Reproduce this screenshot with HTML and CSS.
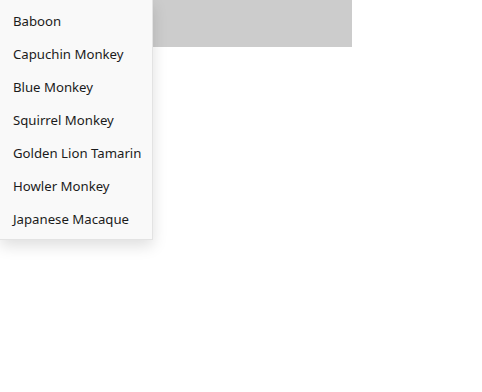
FILE: index.html
```html
<!doctype html>
<html lang="en">
    <head>
        <meta charset="utf-8">
        <title>Monkeys</title>
        <link rel="stylesheet" href="styles.css">
    </head>
    <body>
        <div class="page">
            <div class="combo"></div>
            <ul class="menu">
                <li class="menu__item">Baboon</li>
                <li class="menu__item">Capuchin Monkey</li>
                <li class="menu__item">Blue Monkey</li>
                <li class="menu__item">Squirrel Monkey</li>
                <li class="menu__item">Golden Lion Tamarin</li>
                <li class="menu__item">Howler Monkey</li>
                <li class="menu__item">Japanese Macaque</li>
            </ul>
        </div>
    </body>
</html>
```

FILE: styles.css
```css
body {
    background: #fff;
    margin: 0;
}

.page {
    position: relative;
    height: 392px;
}

.combo {
    background: #cccccc;
    height: 47px;
    width: 352px;
}

.menu {
    background: #f9f9f9;
    border: 1px solid #e3e3e3;
    border-left: 0;
    border-top: 0;
    box-shadow: 0 6px 14px rgba(0, 0, 0, 0.13);
    box-sizing: border-box;
    font-family: "Noto Sans", sans-serif;
    font-size: 13.2px;
    color: #1b1b1b;
    left: 0;
    list-style: none;
    margin: 0;
    padding: 5px 0 3px;
    position: absolute;
    top: 0;
    width: 153px;
}

.menu__item {
    height: 33px;
    line-height: 33px;
    padding-left: 13px;
    white-space: nowrap;
}
```
